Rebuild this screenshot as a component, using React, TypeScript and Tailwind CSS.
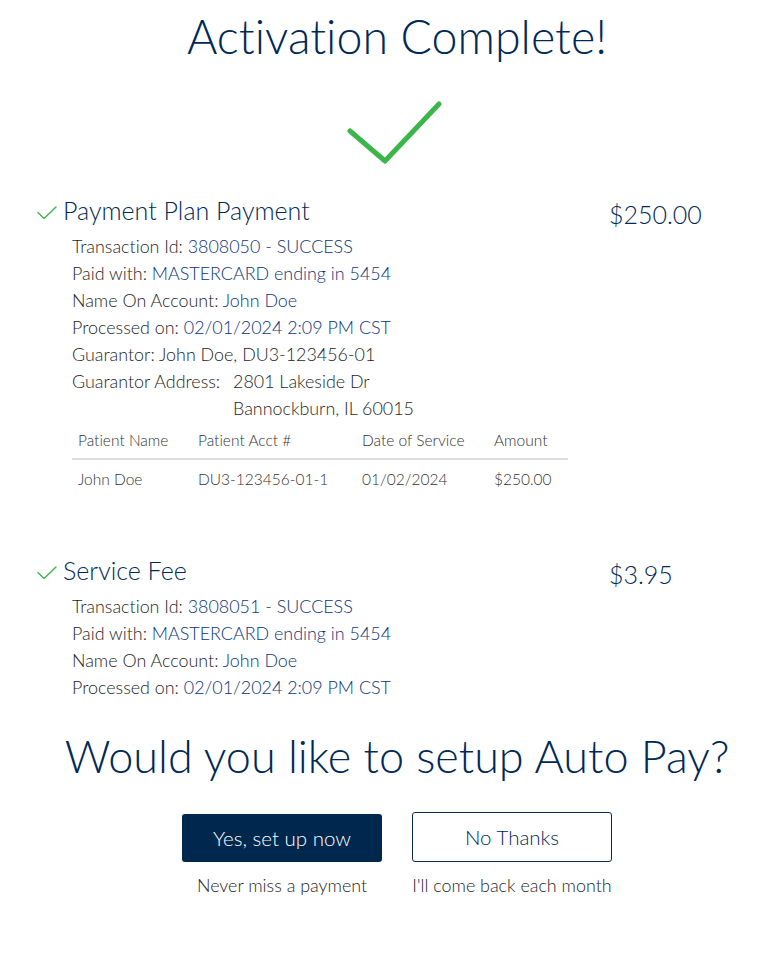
import React from "react";

const Check = ({ className }: { className?: string }) => (
  <svg viewBox="0 0 20 14" className={className} fill="none">
    <path d="M1 6.5 L7 12.5 L19 1" stroke="#3cb54a" strokeWidth="1.4" strokeLinecap="round" strokeLinejoin="round" />
  </svg>
);

const Line = ({ label, value }: { label: string; value?: string }) => (
  <div className="h-[27px] leading-[27px]">
    <span className="text-[#1e1e1e]">{label}</span>
    {value && <span className="text-[#0c3479]"> {value}</span>}
  </div>
);

export default function App() {
  return (
    <div className="w-[772px] h-[956px] overflow-hidden bg-white">
      <div
        className="w-[794px] text-[17.9px] font-light [font-variant-ligatures:none]"
        style={{ fontFamily: "Lato, 'Open Sans', sans-serif" }}
      >
        <h1 className="text-center text-[46.5px] leading-[56px] pt-[8px] text-[#002a55] font-light">Activation Complete!</h1>
        <div className="flex justify-center pt-[37px]">
          <svg width="100" height="70" viewBox="0 0 100 70" fill="none">
            <path d="M3 30 L38 60 L92 3" stroke="#3cb54a" strokeWidth="5" strokeLinecap="round" strokeLinejoin="round" />
          </svg>
        </div>

        <div className="flex pt-[23px]">
          <div className="pl-[37px] w-[609px]">
            <div className="flex items-center h-[34px]">
              <Check className="w-[20px] h-[14px] mr-[6px] mt-[4px]" />
              <span className="text-[25px] text-[#002a55] font-light">Payment Plan Payment</span>
            </div>
            <div className="pl-[35px] mt-[5px]">
              <Line label="Transaction Id:" value="3808050 - SUCCESS" />
              <Line label="Paid with:" value="MASTERCARD ending in 5454" />
              <Line label="Name On Account:" value="John Doe" />
              <Line label="Processed on:" value="02/01/2024 2:09 PM CST" />
              <Line label="Guarantor: John Doe, DU3-123456-01" />
              <div className="flex text-[#1e1e1e]">
                <div className="w-[161px] leading-[27px]">Guarantor Address:</div>
                <div className="leading-[27px]">
                  <div>2801 Lakeside Dr</div>
                  <div>Bannockburn, IL 60015</div>
                </div>
              </div>
              <div className="w-[496px] mt-[1px] text-[15.5px] font-light text-[#333333]">
                <div className="flex h-[37px] items-center border-b-2 border-[#dddddd] pl-[6px]">
                  <div className="w-[120px]">Patient Name</div>
                  <div className="w-[164px]">Patient Acct #</div>
                  <div className="w-[132px]">Date of Service</div>
                  <div>Amount</div>
                </div>
                <div className="flex h-[39px] items-center pl-[6px]">
                  <div className="w-[120px]">John Doe</div>
                  <div className="w-[164px]">DU3-123456-01-1</div>
                  <div className="w-[132px]">01/02/2024</div>
                  <div>$250.00</div>
                </div>
              </div>
            </div>
          </div>
          <div className="text-[25px] text-[#002a55] font-light pt-[3px] leading-[34px]">$250.00</div>
        </div>

        <div className="flex pt-[55px]">
          <div className="pl-[37px] w-[609px]">
            <div className="flex items-center h-[34px]">
              <Check className="w-[20px] h-[14px] mr-[6px] mt-[4px]" />
              <span className="text-[25px] text-[#002a55] font-light">Service Fee</span>
            </div>
            <div className="pl-[35px] mt-[5px]">
              <Line label="Transaction Id:" value="3808051 - SUCCESS" />
              <Line label="Paid with:" value="MASTERCARD ending in 5454" />
              <Line label="Name On Account:" value="John Doe" />
              <Line label="Processed on:" value="02/01/2024 2:09 PM CST" />
            </div>
          </div>
          <div className="text-[25px] text-[#002a55] font-light pt-[3px] leading-[34px]">$3.95</div>
        </div>

        <h2 className="text-center text-[45px] leading-[56px] mt-[27px] text-[#002a55] font-light">Would you like to setup Auto Pay?</h2>

        <div className="flex justify-center gap-[30px] mt-[28px]">
          <div className="flex flex-col items-center w-[200px]">
            <button className="w-[200px] h-[48px] mt-[2px] rounded-[3px] bg-[#00284f] text-white text-[20.5px] font-light">Yes, set up now</button>
            <div className="mt-[12px] text-[#1e1e1e] leading-[22px] whitespace-nowrap">Never miss a payment</div>
          </div>
          <div className="flex flex-col items-center w-[200px]">
            <button className="w-[200px] h-[50px] rounded-[3px] border border-[#0b2b52] bg-white text-[#002a55] text-[20.5px] font-light">No Thanks</button>
            <div className="mt-[12px] text-[#1e1e1e] leading-[22px] whitespace-nowrap">I'll come back each month</div>
          </div>
        </div>
      </div>
    </div>
  );
}
